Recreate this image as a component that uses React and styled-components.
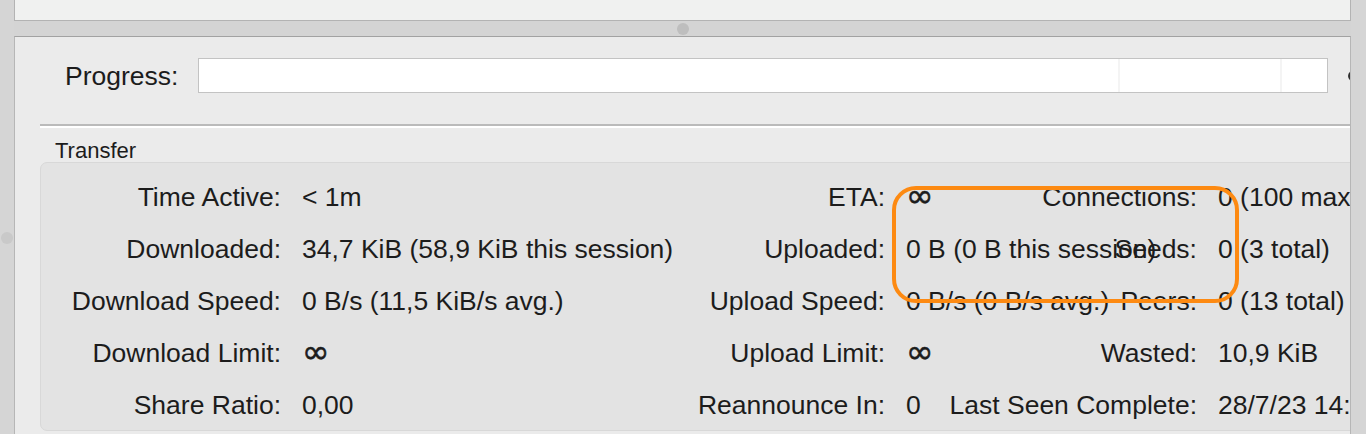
import React from "react";
import styled, { createGlobalStyle } from "styled-components";

const GlobalStyle = createGlobalStyle`
  html, body {
    margin: 0;
    padding: 0;
    background: #d4d4d4;
    overflow: hidden;
  }
  body {
    font-family: "Liberation Sans", Arial, sans-serif;
    color: #1c1c1c;
  }
`;

const INF = "∞";

const rows = [
  [
    ["Time Active:", "< 1m"],
    ["ETA:", INF],
    ["Connections:", "0 (100 max)"],
  ],
  [
    ["Downloaded:", "34,7 KiB (58,9 KiB this session)"],
    ["Uploaded:", "0 B (0 B this session)"],
    ["Seeds:", "0 (3 total)"],
  ],
  [
    ["Download Speed:", "0 B/s (11,5 KiB/s avg.)"],
    ["Upload Speed:", "0 B/s (0 B/s avg.)"],
    ["Peers:", "0 (13 total)"],
  ],
  [
    ["Download Limit:", INF],
    ["Upload Limit:", INF],
    ["Wasted:", "10,9 KiB"],
  ],
  [
    ["Share Ratio:", "0,00"],
    ["Reannounce In:", "0"],
    ["Last Seen Complete:", "28/7/23 14:52"],
  ],
];

const App = () => {
  return (
    <>
      <GlobalStyle />
      <Window>
        <SideStrip>
          <HandleDot $color="#c9c9c9" />
        </SideStrip>
        <Main>
          <TopPanel />
          <Splitter>
            <HandleDot $color="#bebebe" />
          </Splitter>
          <BottomPanel>
            <ProgressRow>
              <ProgressLabel>Progress:</ProgressLabel>
              <ProgressBar>
                <Segment $grow />
                <Segment $width={160} />
                <Segment $width={45} />
              </ProgressBar>
              <CutControl />
            </ProgressRow>
            <Group>
              <GroupTitle>Transfer</GroupTitle>
              <GroupBox>
                {rows.map((row, i) =>
                  row.map(([label, value], j) => (
                    <React.Fragment key={`${i}-${j}`}>
                      <Label>{label}</Label>
                      <Value>
                        {value === INF ? <Infinity>{INF}</Infinity> : value}
                      </Value>
                    </React.Fragment>
                  ))
                )}
              </GroupBox>
            </Group>
          </BottomPanel>
        </Main>
        <SideStrip $right />
        <Highlight />
      </Window>
    </>
  );
};

export default App;

const Window = styled.div`
  position: relative;
  display: grid;
  grid-template-columns: 14px 1337px 15px;
  width: 1366px;
  height: 434px;
  overflow: hidden;
`;

const SideStrip = styled.div`
  background: #d5d5d5;
  display: flex;
  justify-content: center;
  padding-top: ${(p) => (p.$right ? 0 : 232)}px;
  box-sizing: border-box;
`;

const HandleDot = styled.div`
  width: 12px;
  height: 12px;
  border-radius: 50%;
  background: ${(p) => p.$color};
`;

const Main = styled.div`
  display: flex;
  flex-direction: column;
  height: 434px;
`;

const TopPanel = styled.div`
  height: 20px;
  background: #f0f1f0;
  border: 1px solid #b3b3b3;
  border-top: none;
`;

const Splitter = styled.div`
  height: 15px;
  display: flex;
  align-items: center;
  justify-content: center;
  background: #d4d4d4;
`;

const BottomPanel = styled.div`
  flex: 1;
  background: #ebebeb;
  border: 1px solid #b6b6b6;
  border-top-color: #a2a2a2;
  border-bottom: none;
  overflow: hidden;
  display: flex;
  flex-direction: column;
`;

const ProgressRow = styled.div`
  display: flex;
  align-items: center;
  margin-top: 21px;
  padding-left: 50px;
  height: 35px;
`;

const ProgressLabel = styled.span`
  font-size: 26.5px;
  width: 133px;
  flex-shrink: 0;
  padding-top: 2px;
`;

const ProgressBar = styled.div`
  display: flex;
  width: 1130px;
  height: 35px;
  box-sizing: border-box;
  background: #ffffff;
  border: 1px solid #c3c3c3;
  flex-shrink: 0;
`;

const Segment = styled.div`
  flex: ${(p) => (p.$grow ? 1 : "none")};
  width: ${(p) => (p.$width ? `${p.$width}px` : "auto")};
  & + & {
    border-left: 2px solid #f4f4f4;
  }
`;

const CutControl = styled.div`
  flex-shrink: 0;
  width: 14px;
  height: 12px;
  margin-left: 20px;
  border-radius: 50%;
  background: #2e2e2e;
`;

const Group = styled.div`
  margin-top: 31px;
  margin-left: 25px;
  width: 1340px;
  border-top: 2px solid #bababa;
  box-shadow: inset 0 2px 0 #ffffff;
`;

const GroupTitle = styled.div`
  margin-top: 12px;
  margin-bottom: -2px;
  padding-left: 15px;
  font-size: 22px;
  line-height: 26px;
`;

const GroupBox = styled.div`
  box-sizing: border-box;
  height: 269px;
  padding-top: 8px;
  background: #e3e3e3;
  border: 1px solid #d8d8d8;
  border-radius: 7px;
  display: grid;
  grid-template-columns: 240px 409px 195px 55px 257px 1fr;
  grid-auto-rows: 52px;
  align-items: center;
  font-size: 26.5px;
  white-space: nowrap;
`;

const Label = styled.div`
  text-align: right;
`;

const Value = styled.div`
  padding-left: 21px;
  overflow: visible;
`;

const Infinity = styled.span`
  display: inline-block;
  font-family: "DejaVu Sans", sans-serif;
  font-size: 33px;
  line-height: 20px;
  vertical-align: -1px;
  -webkit-text-stroke: 0.6px #1c1c1c;
`;

const Highlight = styled.div`
  position: absolute;
  left: 892px;
  top: 186px;
  width: 347px;
  height: 117px;
  box-sizing: border-box;
  border: 4px solid #fd8a12;
  border-radius: 24px;
  pointer-events: none;
`;
